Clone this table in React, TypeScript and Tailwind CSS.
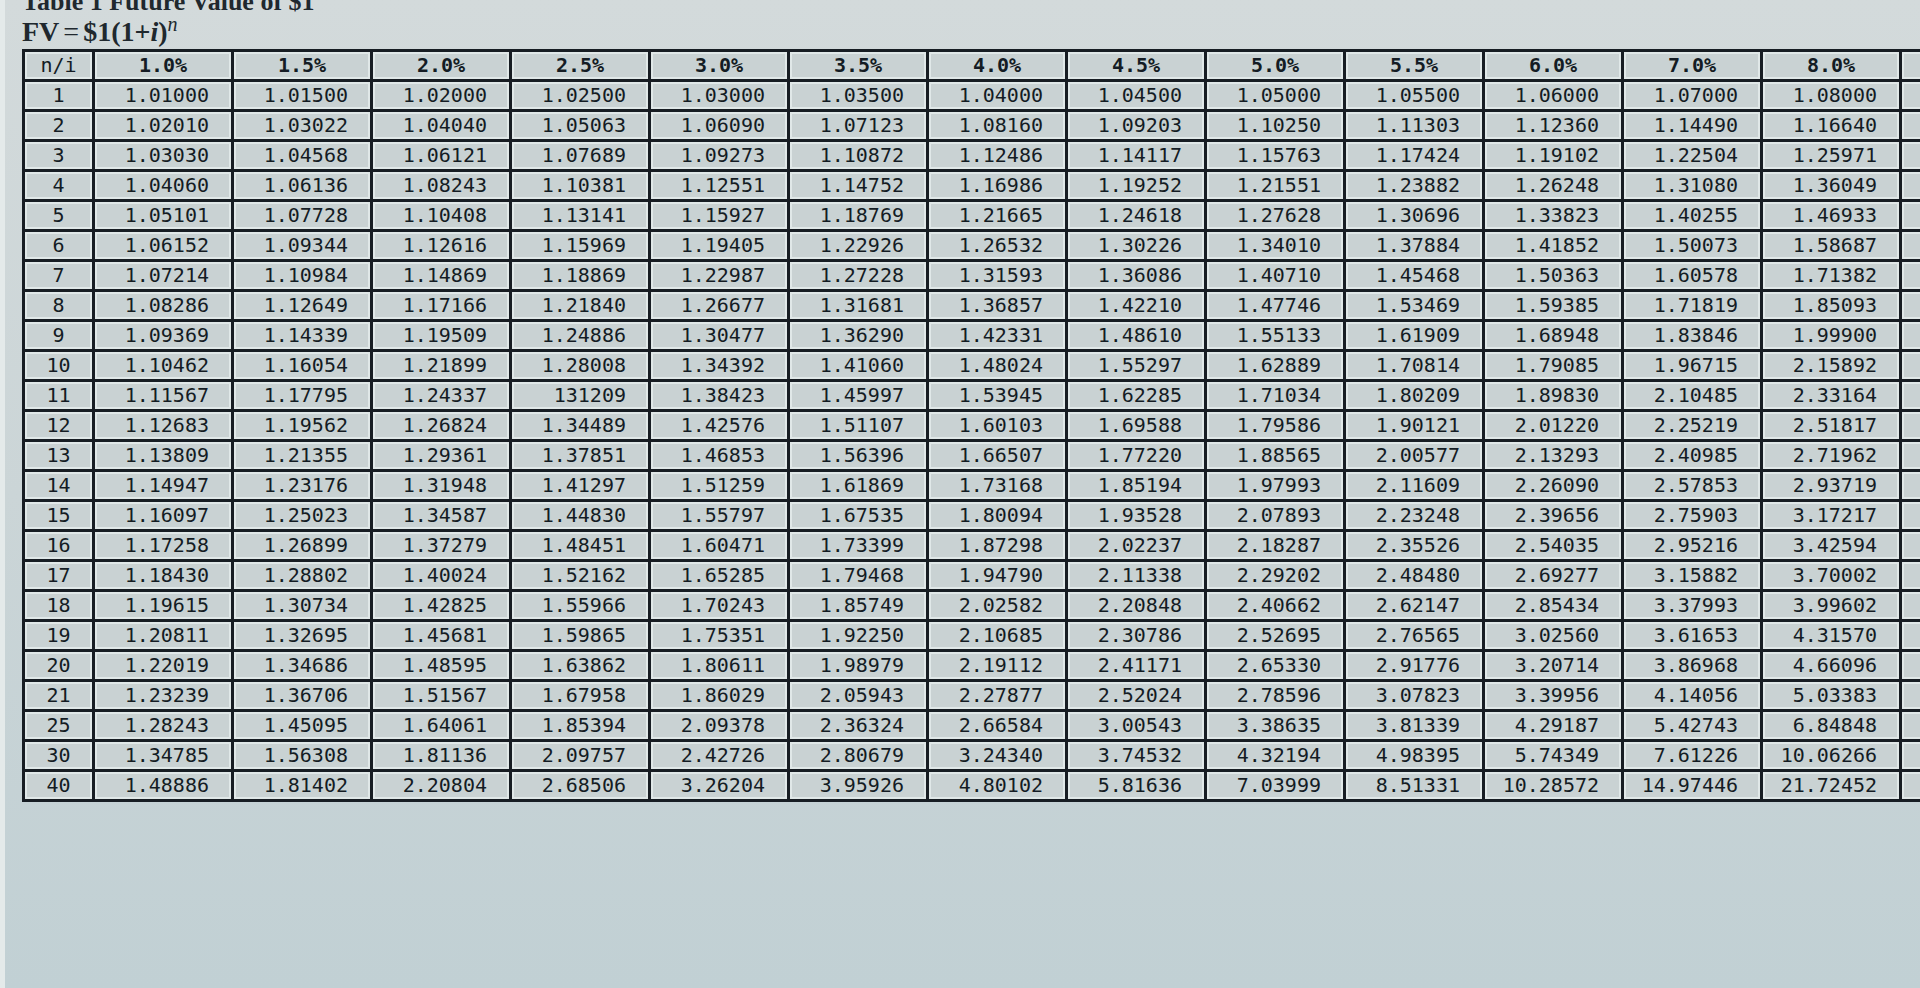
const rates = ["1.0%", "1.5%", "2.0%", "2.5%", "3.0%", "3.5%", "4.0%", "4.5%", "5.0%", "5.5%", "6.0%", "7.0%", "8.0%"];

const rows: [string, string[]][] = [
  ["1", ["1.01000", "1.01500", "1.02000", "1.02500", "1.03000", "1.03500", "1.04000", "1.04500", "1.05000", "1.05500", "1.06000", "1.07000", "1.08000"]],
  ["2", ["1.02010", "1.03022", "1.04040", "1.05063", "1.06090", "1.07123", "1.08160", "1.09203", "1.10250", "1.11303", "1.12360", "1.14490", "1.16640"]],
  ["3", ["1.03030", "1.04568", "1.06121", "1.07689", "1.09273", "1.10872", "1.12486", "1.14117", "1.15763", "1.17424", "1.19102", "1.22504", "1.25971"]],
  ["4", ["1.04060", "1.06136", "1.08243", "1.10381", "1.12551", "1.14752", "1.16986", "1.19252", "1.21551", "1.23882", "1.26248", "1.31080", "1.36049"]],
  ["5", ["1.05101", "1.07728", "1.10408", "1.13141", "1.15927", "1.18769", "1.21665", "1.24618", "1.27628", "1.30696", "1.33823", "1.40255", "1.46933"]],
  ["6", ["1.06152", "1.09344", "1.12616", "1.15969", "1.19405", "1.22926", "1.26532", "1.30226", "1.34010", "1.37884", "1.41852", "1.50073", "1.58687"]],
  ["7", ["1.07214", "1.10984", "1.14869", "1.18869", "1.22987", "1.27228", "1.31593", "1.36086", "1.40710", "1.45468", "1.50363", "1.60578", "1.71382"]],
  ["8", ["1.08286", "1.12649", "1.17166", "1.21840", "1.26677", "1.31681", "1.36857", "1.42210", "1.47746", "1.53469", "1.59385", "1.71819", "1.85093"]],
  ["9", ["1.09369", "1.14339", "1.19509", "1.24886", "1.30477", "1.36290", "1.42331", "1.48610", "1.55133", "1.61909", "1.68948", "1.83846", "1.99900"]],
  ["10", ["1.10462", "1.16054", "1.21899", "1.28008", "1.34392", "1.41060", "1.48024", "1.55297", "1.62889", "1.70814", "1.79085", "1.96715", "2.15892"]],
  ["11", ["1.11567", "1.17795", "1.24337", "131209", "1.38423", "1.45997", "1.53945", "1.62285", "1.71034", "1.80209", "1.89830", "2.10485", "2.33164"]],
  ["12", ["1.12683", "1.19562", "1.26824", "1.34489", "1.42576", "1.51107", "1.60103", "1.69588", "1.79586", "1.90121", "2.01220", "2.25219", "2.51817"]],
  ["13", ["1.13809", "1.21355", "1.29361", "1.37851", "1.46853", "1.56396", "1.66507", "1.77220", "1.88565", "2.00577", "2.13293", "2.40985", "2.71962"]],
  ["14", ["1.14947", "1.23176", "1.31948", "1.41297", "1.51259", "1.61869", "1.73168", "1.85194", "1.97993", "2.11609", "2.26090", "2.57853", "2.93719"]],
  ["15", ["1.16097", "1.25023", "1.34587", "1.44830", "1.55797", "1.67535", "1.80094", "1.93528", "2.07893", "2.23248", "2.39656", "2.75903", "3.17217"]],
  ["16", ["1.17258", "1.26899", "1.37279", "1.48451", "1.60471", "1.73399", "1.87298", "2.02237", "2.18287", "2.35526", "2.54035", "2.95216", "3.42594"]],
  ["17", ["1.18430", "1.28802", "1.40024", "1.52162", "1.65285", "1.79468", "1.94790", "2.11338", "2.29202", "2.48480", "2.69277", "3.15882", "3.70002"]],
  ["18", ["1.19615", "1.30734", "1.42825", "1.55966", "1.70243", "1.85749", "2.02582", "2.20848", "2.40662", "2.62147", "2.85434", "3.37993", "3.99602"]],
  ["19", ["1.20811", "1.32695", "1.45681", "1.59865", "1.75351", "1.92250", "2.10685", "2.30786", "2.52695", "2.76565", "3.02560", "3.61653", "4.31570"]],
  ["20", ["1.22019", "1.34686", "1.48595", "1.63862", "1.80611", "1.98979", "2.19112", "2.41171", "2.65330", "2.91776", "3.20714", "3.86968", "4.66096"]],
  ["21", ["1.23239", "1.36706", "1.51567", "1.67958", "1.86029", "2.05943", "2.27877", "2.52024", "2.78596", "3.07823", "3.39956", "4.14056", "5.03383"]],
  ["25", ["1.28243", "1.45095", "1.64061", "1.85394", "2.09378", "2.36324", "2.66584", "3.00543", "3.38635", "3.81339", "4.29187", "5.42743", "6.84848"]],
  ["30", ["1.34785", "1.56308", "1.81136", "2.09757", "2.42726", "2.80679", "3.24340", "3.74532", "4.32194", "4.98395", "5.74349", "7.61226", "10.06266"]],
  ["40", ["1.48886", "1.81402", "2.20804", "2.68506", "3.26204", "3.95926", "4.80102", "5.81636", "7.03999", "8.51331", "10.28572", "14.97446", "21.72452"]],
];

const cell = "h-[27px] border-2 border-[#e0e8e8] bg-[#c9d2d3] p-0 leading-[23px]";

export default function App() {
  return (
    <div className="min-h-screen w-full overflow-hidden border-l-[5px] border-[#e4eaea] bg-gradient-to-b from-[#d3dadb] via-[#cbd5d7] to-[#c1d0d4] pl-[17px] text-[#141c24]">
      <div className="-mt-[12px] font-['Liberation_Serif',serif] text-[26px] font-bold leading-[28px] text-[#20282e]">
        Table 1 Future Value of $1
      </div>
      <div className="font-['Liberation_Serif',serif] text-[28px] font-bold leading-[32px] text-[#20282e]">
        FV<span className="mx-[4px] font-normal">=</span>$1(1+<i>i</i>)
        <sup className="text-[20px] font-normal italic">n</sup>
      </div>
      <div className="mt-[1px] overflow-hidden">
        <table className="w-[2019px] table-fixed border-separate border-spacing-[3px] bg-[#171d23] font-['DejaVu_Sans_Mono',monospace] text-[20px]">
          <colgroup>
            <col className="w-[67px]" />
            {rates.map((r) => (
              <col key={r} className="w-[136px]" />
            ))}
            <col className="w-[136px]" />
          </colgroup>
          <thead>
            <tr>
              <th className={`${cell} text-center font-normal`}>n/i</th>
              {rates.map((r) => (
                <th key={r} className={`${cell} text-center font-bold`}>
                  {r}
                </th>
              ))}
              <th className={cell}></th>
            </tr>
          </thead>
          <tbody>
            {rows.map(([n, vals]) => (
              <tr key={n}>
                <td className={`${cell} text-center`}>{n}</td>
                {vals.map((v, i) => (
                  <td key={i} className={`${cell} pr-[20px] text-right`}>
                    {v}
                  </td>
                ))}
                <td className={cell}></td>
              </tr>
            ))}
          </tbody>
        </table>
      </div>
    </div>
  );
}
